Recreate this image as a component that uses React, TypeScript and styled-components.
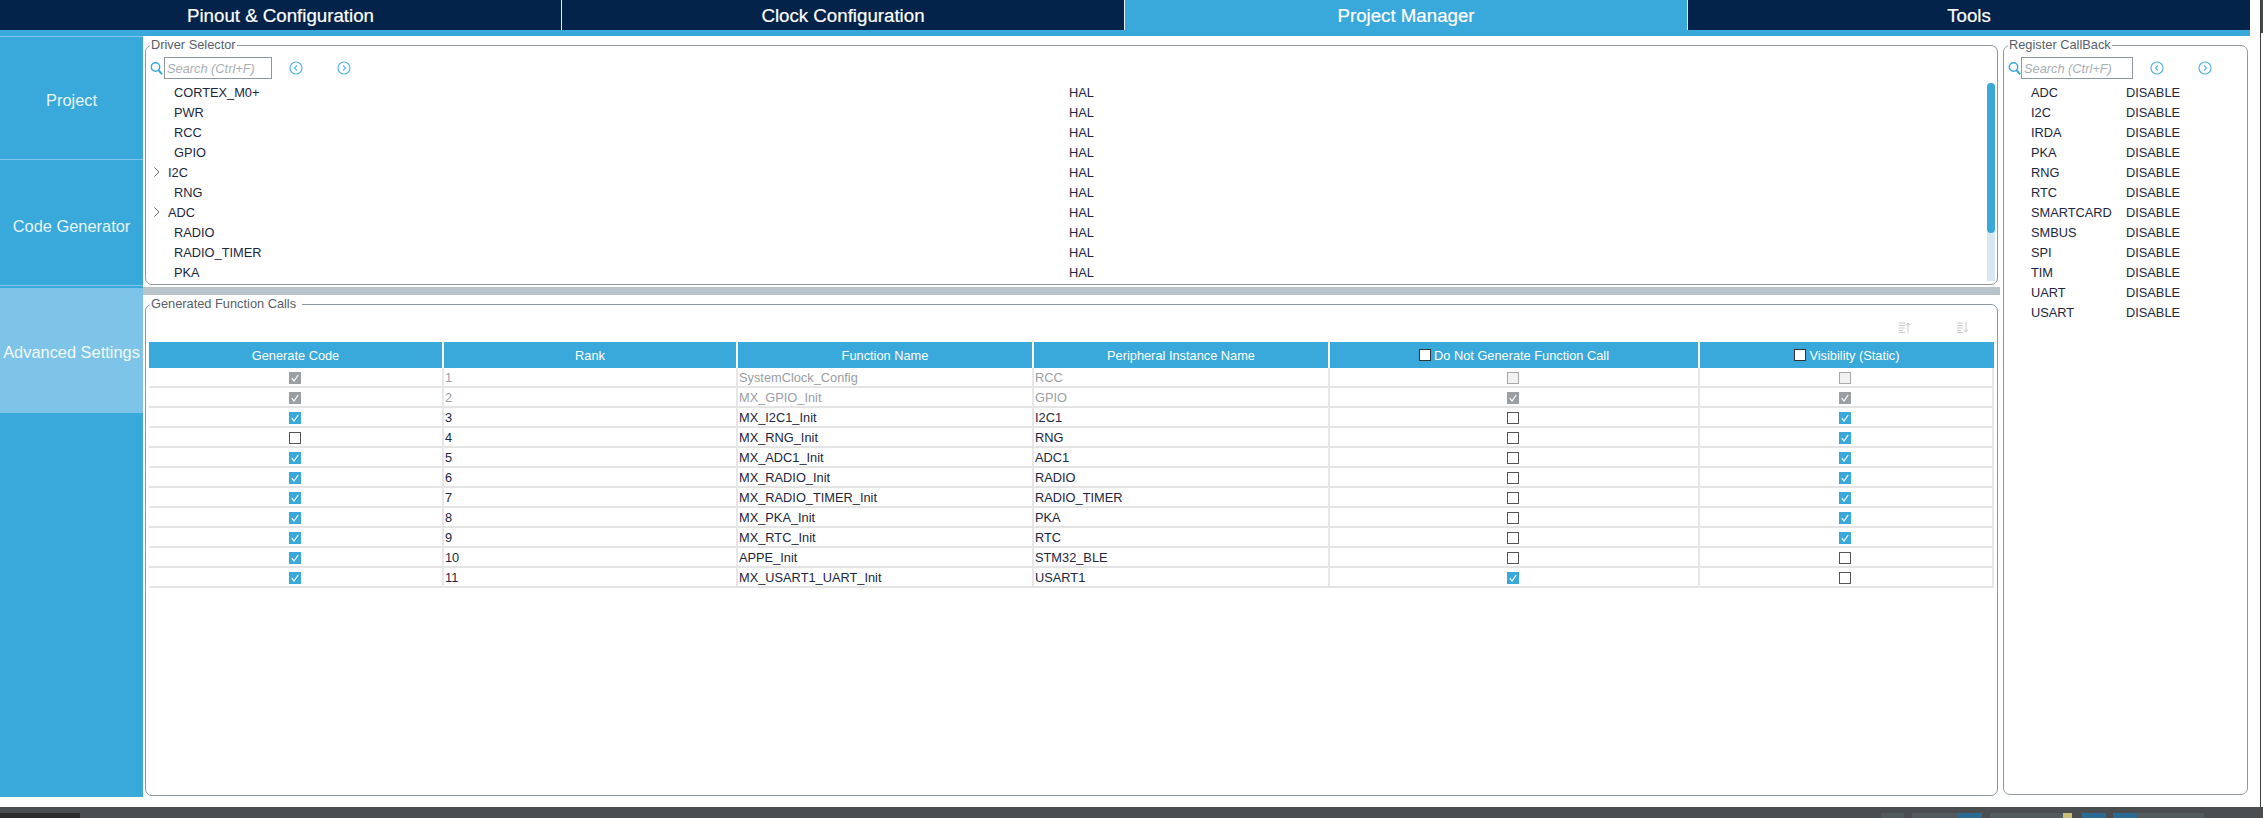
import React from "react";
import styled, { createGlobalStyle } from "styled-components";

const BLUE = "#39a9dc";
const NAVY = "#03234b";
const BORDER = "#8e989e";
const TEXT = "#1d2740";

type BoxState = "on" | "off" | "lockedOn" | "lockedOff";

interface CallRow {
  name: string;
  instance: string;
  generate: BoxState;
  skip: BoxState;
  visible: BoxState;
}

const drivers = [
  { name: "CORTEX_M0+" },
  { name: "PWR" },
  { name: "RCC" },
  { name: "GPIO" },
  { name: "I2C", tree: true },
  { name: "RNG" },
  { name: "ADC", tree: true },
  { name: "RADIO" },
  { name: "RADIO_TIMER" },
  { name: "PKA" },
];

const callbacks = [
  "ADC",
  "I2C",
  "IRDA",
  "PKA",
  "RNG",
  "RTC",
  "SMARTCARD",
  "SMBUS",
  "SPI",
  "TIM",
  "UART",
  "USART",
];

const calls: CallRow[] = [
  { name: "SystemClock_Config", instance: "RCC", generate: "lockedOn", skip: "lockedOff", visible: "lockedOff" },
  { name: "MX_GPIO_Init", instance: "GPIO", generate: "lockedOn", skip: "lockedOn", visible: "lockedOn" },
  { name: "MX_I2C1_Init", instance: "I2C1", generate: "on", skip: "off", visible: "on" },
  { name: "MX_RNG_Init", instance: "RNG", generate: "off", skip: "off", visible: "on" },
  { name: "MX_ADC1_Init", instance: "ADC1", generate: "on", skip: "off", visible: "on" },
  { name: "MX_RADIO_Init", instance: "RADIO", generate: "on", skip: "off", visible: "on" },
  { name: "MX_RADIO_TIMER_Init", instance: "RADIO_TIMER", generate: "on", skip: "off", visible: "on" },
  { name: "MX_PKA_Init", instance: "PKA", generate: "on", skip: "off", visible: "on" },
  { name: "MX_RTC_Init", instance: "RTC", generate: "on", skip: "off", visible: "on" },
  { name: "APPE_Init", instance: "STM32_BLE", generate: "on", skip: "off", visible: "off" },
  { name: "MX_USART1_UART_Init", instance: "USART1", generate: "on", skip: "on", visible: "off" },
];

function SearchBar({ width, iconGap }: { width: number; iconGap: number }) {
  return (
    <SearchRow>
      <svg width="13" height="15" viewBox="0 0 13 15" fill="none" stroke={BLUE}>
        <circle cx="5.5" cy="6" r="4.2" strokeWidth="1.5" />
        <path d="M8.6 9.2 L12 13.4" strokeWidth="2" />
      </svg>
      <SearchInput $width={width} $iconGap={iconGap} placeholder="Search (Ctrl+F)" readOnly />
      <NavButton $first>
        <NavIcon direction="left" />
      </NavButton>
      <NavButton>
        <NavIcon direction="right" />
      </NavButton>
    </SearchRow>
  );
}

function NavIcon({ direction }: { direction: "left" | "right" }) {
  return (
    <svg width="14" height="14" viewBox="0 0 14 14" fill="none" stroke="#58b6e3">
      <circle cx="7" cy="7" r="6" strokeWidth="1.2" />
      <path
        d={direction === "left" ? "M8 4.5 L5.5 7 L8 9.5" : "M6 4.5 L8.5 7 L6 9.5"}
        strokeWidth="1.1"
      />
    </svg>
  );
}

function CheckBox({ state }: { state: BoxState }) {
  const checked = state === "on" || state === "lockedOn";
  return (
    <Box $state={state}>
      {checked && (
        <svg width="12" height="12" viewBox="0 0 12 12" fill="none" stroke="#fff">
          <path d="M2.8 6.2 L5 9 L9.2 3" strokeWidth="1.2" />
        </svg>
      )}
    </Box>
  );
}

function SortIcon({ down }: { down?: boolean }) {
  return (
    <svg width="12" height="11" viewBox="0 0 12 11" fill="none" stroke="#c9c9c9">
      <path d="M0 1 H6 M0 3.5 H6 M0 6 H6 M0 8.5 H4 M0 10.5 H6" strokeWidth="1" />
      <path
        d={down ? "M9 0 V10 M7 7.5 L9 10 L11 7.5" : "M9 10.5 V1 M7 3.5 L9 1 L11 3.5"}
        strokeWidth="1"
      />
    </svg>
  );
}

export default function App() {
  return (
    <>
      <GlobalStyle />
      <Page>
        <Screen>
          <Window>
            <TabBar>
              <Tab>Pinout &amp; Configuration</Tab>
              <Tab>Clock Configuration</Tab>
              <Tab $active>Project Manager</Tab>
              <Tab $last>Tools</Tab>
            </TabBar>
            <Main>
              <Sidebar>
                <SideItem $height={124} $offset={4} $lineTop>
                  Project
                </SideItem>
                <SideItem $height={126} $offset={8}>
                  Code Generator
                </SideItem>
                <SideItem $height={125} $offset={4} $active>
                  Advanced Settings
                </SideItem>
              </Sidebar>

              <Center>
                <DriverPanel>
                  <PanelTitle>Driver Selector</PanelTitle>
                  <SearchBar width={108} iconGap={1} />
                  <DriverBody>
                    <DriverList>
                      {drivers.map((d) => (
                        <DriverRow key={d.name}>
                          <DriverName $tree={d.tree}>
                            {d.tree && (
                              <svg width="8" height="12" viewBox="0 0 8 12" fill="none" stroke="#666">
                                <path d="M1.5 1.5 L6 6 L1.5 10.5" strokeWidth="1" />
                              </svg>
                            )}
                            {d.name}
                          </DriverName>
                          <span>HAL</span>
                        </DriverRow>
                      ))}
                    </DriverList>
                    <ScrollTrack>
                      <ScrollThumb />
                    </ScrollTrack>
                  </DriverBody>
                </DriverPanel>

                <Splitter />

                <CallsPanel>
                  <PanelTitle $gap={6}>Generated Function Calls</PanelTitle>
                  <SortBar>
                    <SortIcon />
                    <SortIcon down />
                  </SortBar>
                  <CallsTable>
                    <HeadRow>
                      <HeadCell>Generate Code</HeadCell>
                      <HeadCell>Rank</HeadCell>
                      <HeadCell>Function Name</HeadCell>
                      <HeadCell>Peripheral Instance Name</HeadCell>
                      <HeadCell>
                        <HeadBox />
                        Do Not Generate Function Call
                      </HeadCell>
                      <HeadCell $last>
                        <HeadBox />
                        Visibility (Static)
                      </HeadCell>
                    </HeadRow>
                    {calls.map((c, i) => (
                      <BodyRow key={c.name}>
                        <BoxCell>
                          <CheckBox state={c.generate} />
                        </BoxCell>
                        <TextCell $muted={i < 2}>{i + 1}</TextCell>
                        <TextCell $muted={i < 2}>{c.name}</TextCell>
                        <TextCell $muted={i < 2}>{c.instance}</TextCell>
                        <BoxCell>
                          <CheckBox state={c.skip} />
                        </BoxCell>
                        <BoxCell>
                          <CheckBox state={c.visible} />
                        </BoxCell>
                      </BodyRow>
                    ))}
                  </CallsTable>
                </CallsPanel>
              </Center>

              <CallbackPanel>
                <PanelTitle>Register CallBack</PanelTitle>
                <SearchBar width={112} iconGap={0} />
                <CallbackList>
                  {callbacks.map((name) => (
                    <CallbackRow key={name}>
                      <span>{name}</span>
                      <span>DISABLE</span>
                    </CallbackRow>
                  ))}
                </CallbackList>
              </CallbackPanel>
            </Main>
          </Window>
          <RightEdge>
            <RightEdgeTop />
          </RightEdge>
        </Screen>

        <Taskbar>
          <TaskItem $width={80} $color="#2c2c2c" />
          <TaskSpacer />
          <TaskItem $width={23} $color="#50595c" />
          <TaskItem $width={46} $color="#535b5e" $gapLeft={8} />
          <TaskItem $width={24} $color="#2c6a94" />
          <TaskItem $width={73} $color="#535b5e" $gapLeft={8} />
          <TaskItem $width={9} $color="#c9bd7c" />
          <TaskItem $width={24} $color="#2c6a94" $gapLeft={10} />
          <TaskItem $width={24} $color="#2c6a94" $gapLeft={7} />
          <TaskItem $width={67} $color="#535b5e" />
          <TaskSpacerRight />
        </Taskbar>
      </Page>
    </>
  );
}

const GlobalStyle = createGlobalStyle`
  html, body {
    margin: 0;
    padding: 0;
    background: #fff;
  }
  * {
    box-sizing: border-box;
  }
  body {
    font-family: "Liberation Sans", Arial, sans-serif;
    font-size: 12.8px;
    color: ${TEXT};
  }
`;

const Page = styled.div`
  width: 2263px;
  height: 818px;
  display: flex;
  flex-direction: column;
  overflow: hidden;
`;

const Screen = styled.div`
  height: 807px;
  display: flex;
`;

const Window = styled.div`
  width: 2260px;
  display: flex;
  flex-direction: column;
`;

const RightEdge = styled.div`
  flex: 1;
  border-left: 1px solid #3c3f42;
`;

const RightEdgeTop = styled.div`
  height: 33px;
  background: #45484b;
`;

const TabBar = styled.div`
  width: 2250px;
  height: 36px;
  flex: none;
  display: grid;
  grid-template-columns: 562px 563px 563px 562px;
  background: ${NAVY};
  border-bottom: 6px solid ${BLUE};
`;

const Tab = styled.div<{ $active?: boolean; $last?: boolean }>`
  padding-top: 2px;
  display: flex;
  align-items: center;
  justify-content: center;
  font-size: 18.7px;
  color: #fff;
  -webkit-text-stroke: 0.2px #fff;
  background: ${(p) => (p.$active ? BLUE : "transparent")};
  border-right: ${(p) => (p.$last ? "none" : "1px solid #e6ecf1")};
`;

const Main = styled.div`
  height: 761px;
  display: flex;
  align-items: flex-start;
`;

const Sidebar = styled.div`
  width: 143px;
  height: 761px;
  flex: none;
  background: ${BLUE};
  display: flex;
  flex-direction: column;
  gap: 2px;
`;

const SideItem = styled.div<{ $height: number; $offset: number; $active?: boolean; $lineTop?: boolean }>`
  height: ${(p) => p.$height}px;
  padding-top: ${(p) => p.$offset}px;
  display: flex;
  align-items: center;
  justify-content: center;
  font-size: 16.4px;
  color: ${(p) => (p.$active ? "#f1f9fd" : "#e8f5fb")};
  background: ${(p) => (p.$active ? "#7dc4e8" : "transparent")};
  border-top: ${(p) => (p.$lineTop ? "1px solid #7fc6ea" : "none")};
  border-bottom: ${(p) => (p.$active ? "none" : "1px solid #7fc6ea")};
  margin-bottom: ${(p) => (p.$lineTop ? "-2px" : "0")};
`;

const Center = styled.div`
  width: 1857px;
  height: 761px;
  flex: none;
  display: flex;
  flex-direction: column;
`;

const Panel = styled.fieldset`
  margin: 0;
  padding: 0;
  min-width: 0;
  border: 1px solid ${BORDER};
  border-radius: 7px;
  background: #fff;
`;

const PanelTitle = styled.legend<{ $gap?: number }>`
  margin-left: 4px;
  padding: 0 ${(p) => p.$gap ?? 1}px 0 1px;
  line-height: 16px;
  font-size: 12.8px;
  color: #57606a;
`;

const DriverPanel = styled(Panel)`
  height: 248px;
  margin: 1px 2px 0;
`;

const SearchRow = styled.div`
  height: 22px;
  margin-top: 4px;
  padding-left: 4px;
  display: flex;
  align-items: center;
`;

const SearchInput = styled.input<{ $width: number; $iconGap: number }>`
  width: ${(p) => p.$width}px;
  height: 22px;
  margin-left: ${(p) => p.$iconGap}px;
  padding: 0 2px;
  border: 1px solid ${BORDER};
  border-radius: 0;
  outline: none;
  font-family: inherit;
  font-size: 12.8px;
  font-style: italic;
  &::placeholder {
    color: #a9aeb3;
    opacity: 1;
  }
`;

const NavButton = styled.div<{ $first?: boolean }>`
  width: 14px;
  height: 14px;
  display: flex;
  margin-left: ${(p) => (p.$first ? 17 : 34)}px;
`;

const DriverBody = styled.div`
  margin-top: 3px;
  display: flex;
`;

const DriverList = styled.div`
  flex: 1;
  min-width: 0;
`;

const DriverRow = styled.div`
  height: 20px;
  display: grid;
  grid-template-columns: 923px 1fr;
  align-items: center;
`;

const DriverName = styled.div<{ $tree?: boolean }>`
  display: flex;
  align-items: center;
  gap: 7px;
  padding-left: ${(p) => (p.$tree ? 7 : 28)}px;
`;

const ScrollTrack = styled.div`
  width: 8px;
  height: 198px;
  margin: 1px 2px 0 0;
  background: #d7e7f4;
  border-radius: 4px 4px 0 0;
`;

const ScrollThumb = styled.div`
  height: 150px;
  background: ${BLUE};
  border-radius: 4px;
`;

const Splitter = styled.div`
  height: 8px;
  margin-top: 2px;
  flex: none;
  background: #b9c4ca;
`;

const CallsPanel = styled(Panel)`
  height: 500px;
  margin: 1px 2px 0;
`;

const SortBar = styled.div`
  height: 30px;
  padding-right: 28px;
  display: flex;
  justify-content: flex-end;
  align-items: center;
  gap: 46px;
`;

const CallsTable = styled.div`
  margin: 0 3px;
`;

const COLUMNS = "295px 294px 296px 296px 370px 294px";

const HeadRow = styled.div`
  height: 26px;
  display: grid;
  grid-template-columns: ${COLUMNS};
`;

const HeadCell = styled.div<{ $last?: boolean }>`
  margin-right: ${(p) => (p.$last ? 0 : 2)}px;
  display: flex;
  align-items: center;
  justify-content: center;
  gap: 3px;
  background: ${BLUE};
  color: #fff;
`;

const HeadBox = styled.span`
  width: 12px;
  height: 12px;
  background: #fff;
  border: 1px solid #333;
`;

const BodyRow = styled.div`
  height: 20px;
  display: grid;
  grid-template-columns: ${COLUMNS};
`;

const BoxCell = styled.div`
  display: flex;
  align-items: center;
  justify-content: center;
  padding-right: 2px;
  border-right: 2px solid #e7e7e7;
  border-bottom: 2px solid #e4e4e4;
`;

const TextCell = styled.div<{ $muted?: boolean }>`
  display: flex;
  align-items: center;
  padding: 1px 0 0 1px;
  color: ${(p) => (p.$muted ? "#9a9ea3" : TEXT)};
  border-right: 2px solid #e7e7e7;
  border-bottom: 2px solid #e4e4e4;
`;

const boxColors: Record<BoxState, { bg: string; line: string }> = {
  on: { bg: BLUE, line: BLUE },
  off: { bg: "#fff", line: "#555" },
  lockedOn: { bg: "#9a9fa4", line: "#9a9fa4" },
  lockedOff: { bg: "#f1f1f2", line: "#a6a9ac" },
};

const Box = styled.span<{ $state: BoxState }>`
  width: 12px;
  height: 12px;
  position: relative;
  top: 1px;
  display: flex;
  background: ${(p) => boxColors[p.$state].bg};
  border: 1px solid ${(p) => boxColors[p.$state].line};
  svg {
    margin: -1px;
    flex: none;
  }
`;

const CallbackPanel = styled(Panel)`
  width: 245px;
  height: 758px;
  margin: 1px 0 0 3px;
  flex: none;
`;

const CallbackList = styled.div`
  margin-top: 3px;
`;

const CallbackRow = styled.div`
  height: 20px;
  padding-left: 27px;
  display: grid;
  grid-template-columns: 95px 1fr;
  align-items: center;
`;

const Taskbar = styled.div`
  height: 11px;
  flex: none;
  padding-top: 6px;
  display: flex;
  align-items: stretch;
  background: #4a4e51;
`;

const TaskItem = styled.div<{ $width: number; $color: string; $gapLeft?: number }>`
  width: ${(p) => p.$width}px;
  margin-left: ${(p) => p.$gapLeft ?? 0}px;
  background: ${(p) => p.$color};
`;

const TaskSpacer = styled.div`
  width: 1801px;
`;

const TaskSpacerRight = styled.div`
  flex: 1;
`;
